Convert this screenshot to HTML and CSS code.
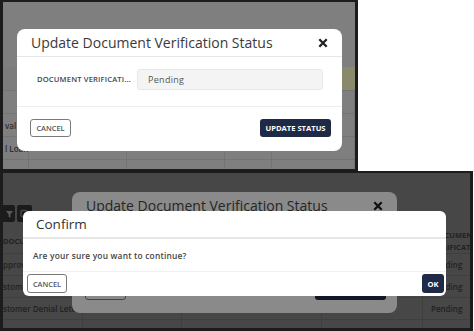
FILE: index.html
```html
<!DOCTYPE html>
<html lang="en">
<head>
<meta charset="utf-8">
<title>Document Verification Status</title>
<link rel="stylesheet" href="styles.css">
</head>
<body>
<div class="shot shot-a">
  <div class="tbl-a">
    <div class="spacer-a"></div>
    <div class="tr-a band"><div class="td lead"></div><div class="td"></div><div class="td"></div><div class="td"></div><div class="td"></div></div>
    <div class="tr-a"><div class="td"></div><div class="td"></div><div class="td"></div><div class="td"></div><div class="td"></div></div>
    <div class="tr-a"><div class="td cell-text">val ...</div><div class="td"></div><div class="td"></div><div class="td"></div><div class="td"></div></div>
    <div class="tr-a"><div class="td cell-text">l Loan</div><div class="td"></div><div class="td"></div><div class="td"></div><div class="td"></div></div>
    <div class="tr-a last"><div class="td"></div><div class="td"></div><div class="td"></div><div class="td"></div><div class="td"></div></div>
  </div>

  <div class="modal modal-a">
    <div class="modal-head">
      <span class="modal-title">Update Document Verification Status</span>
      <svg class="close" width="10" height="10" viewBox="0 0 10 10"><path d="M1.3 1.3L8.7 8.7M8.7 1.3L1.3 8.7" stroke="#222" stroke-width="2.3" fill="none"/></svg>
    </div>
    <div class="modal-body">
      <span class="field-label">DOCUMENT VERIFICATI...</span>
      <div class="field-input">Pending</div>
    </div>
    <div class="modal-foot">
      <button class="btn btn-outline">CANCEL</button>
      <button class="btn btn-primary">UPDATE STATUS</button>
    </div>
  </div>
</div>

<div class="shot shot-b">
  <div class="tbl-b">
    <div class="toolbar">
      <span class="tool"><svg width="12" height="17" viewBox="0 0 12 17"><path d="M3 6h7l-2.6 3.2v3.6l-1.8-1V9.2z" fill="#5a5a5a"/></svg></span>
      <span class="tool wide"><svg width="15" height="17" viewBox="0 0 15 17"><rect x="4" y="5.5" width="6" height="6" rx="1" fill="none" stroke="#4a4a4a" stroke-width="1.3"/></svg></span>
    </div>
    <div class="tr-b head"><div class="td">DOCUMENT TYPE</div><div class="td"></div><div class="td"></div><div class="td"></div><div class="td right-head">DOCUMENT<br>VERIFICATION</div></div>
    <div class="tr-b"><div class="td">pproval Letter</div><div class="td"></div><div class="td"></div><div class="td"></div><div class="td status">Pending</div></div>
    <div class="tr-b"><div class="td">stomer Loan</div><div class="td"></div><div class="td"></div><div class="td"></div><div class="td status">Pending</div></div>
    <div class="tr-b"><div class="td">stomer Denial Letter</div><div class="td"></div><div class="td"></div><div class="td"></div><div class="td status">Pending</div></div>
    <div class="tr-b"><div class="td"></div><div class="td"></div><div class="td"></div><div class="td"></div><div class="td"></div></div>
  </div>

  <div class="modal modal-dim">
    <div class="modal-head">
      <span class="modal-title">Update Document Verification Status</span>
      <svg class="close" width="10" height="10" viewBox="0 0 10 10"><path d="M1.3 1.3L8.7 8.7M8.7 1.3L1.3 8.7" stroke="#111" stroke-width="2.3" fill="none"/></svg>
    </div>
    <div class="modal-body">
      <span class="field-label">DOCUMENT VERIFICATI...</span>
      <div class="field-input">Pending</div>
    </div>
    <div class="modal-foot">
      <button class="btn btn-outline">CANCEL</button>
      <button class="btn btn-primary">UPDATE STATUS</button>
    </div>
  </div>

  <div class="confirm">
    <div class="confirm-head">Confirm</div>
    <div class="confirm-body">Are your sure you want to continue?</div>
    <div class="confirm-foot">
      <button class="btn btn-outline small">CANCEL</button>
      <button class="btn btn-primary ok">OK</button>
    </div>
  </div>
</div>
</body>
</html>
```

FILE: styles.css
```css
* { box-sizing: border-box; }

body {
  margin: 0;
  width: 474px;
  height: 331px;
  overflow: hidden;
  background: #ffffff;
  font-family: "Open Sans", "Liberation Sans", sans-serif;
  color: #333;
}

.shot {
  position: relative;
  overflow: hidden;
  border-style: solid;
  border-color: #1c1c1c;
}

.shot-a {
  width: 358px;
  height: 171px;
  border-width: 2px 3px 2px 3px;
  background: #7f7f7f;
}

.shot-b {
  width: 473px;
  height: 160px;
  border-width: 2px 3px 3px 3px;
  background: #474747;
}

/* ---------- background table, first shot ---------- */
.spacer-a { height: 65px; }

.tr-a {
  display: grid;
  grid-template-columns: 26px 98px 98px 47px 1fr;
  height: 23px;
  border-top: 1px solid #747474;
}

.tr-a .td {
  border-right: 1px solid #747474;
}

.tr-a.band { border-top: none; }
.tr-a.band .td { background: #8a896c; border-right: none; }
.tr-a.band .td.lead { background: #7c7c7c; }

.cell-text {
  font-size: 8px;
  font-weight: 600;
  color: #2e2e2e;
  white-space: nowrap;
  overflow: hidden;
  padding-left: 2px;
  display: flex;
  align-items: center;
}

/* ---------- background table, second shot ---------- */
.toolbar {
  display: flex;
  gap: 2px;
  padding-top: 32px;
  height: 55px;
}

.tool {
  display: block;
  width: 12px;
  height: 17px;
  background: #1b1b1b;
  border-radius: 0 2px 2px 0;
}
.tool svg { display: block; }
.tool.wide { width: 15px; border-radius: 2px; }

.tr-b {
  display: grid;
  grid-template-columns: 80px 99px 140px 101px 1fr;
  height: 22px;
  border-top: 1px solid #3f3f3f;
}
.tr-b.head { height: 25px; border-top: none; }

.tr-b .td {
  border-right: 1px solid #3f3f3f;
  font-size: 8px;
  font-weight: 600;
  color: #222;
  white-space: nowrap;
  overflow: hidden;
  display: flex;
  align-items: center;
}
.tr-b .td:last-child { border-right: none; }
.tr-b.head .td { font-weight: 700; font-size: 7.5px; }

.right-head {
  line-height: 12px;
  padding-left: 10px;
}
.status { padding-left: 8px; }

/* ---------- modal ---------- */
.modal {
  position: absolute;
  width: 325px;
  background: #ffffff;
  border-radius: 8px;
  display: flex;
  flex-direction: column;
}

.modal-a { left: 14px; top: 27px; height: 122px; }

.modal-head {
  height: 28px;
  padding: 0 14px;
  display: flex;
  align-items: center;
  justify-content: space-between;
  border-bottom: 1px solid #e6e6e6;
}

.modal-title {
  font-size: 14px;
  color: #3a3a3a;
  white-space: nowrap;
}

.close { display: block; }

.modal-body {
  height: 50px;
  padding: 12px 19px 0 20px;
  display: flex;
  align-items: flex-start;
  border-bottom: 1px solid #eeeeee;
}

.field-label {
  width: 100px;
  height: 21px;
  line-height: 21px;
  font-size: 7.6px;
  letter-spacing: 0.15px;
  font-weight: 600;
  color: #444;
  white-space: nowrap;
  overflow: hidden;
}

.field-input {
  flex: 1;
  height: 21px;
  line-height: 19px;
  padding-left: 10px;
  background: #f4f4f4;
  border: 1px solid #e8e8e8;
  border-radius: 3px;
  font-size: 9px;
  letter-spacing: 0.3px;
  color: #555;
}

.modal-foot {
  flex: 1;
  padding: 12px 11px 0 13px;
  display: flex;
  justify-content: space-between;
  align-items: flex-start;
}

.btn {
  height: 18px;
  padding: 0;
  border-radius: 3px;
  font-family: inherit;
  font-size: 7.4px;
  font-weight: 600;
  white-space: nowrap;
  cursor: pointer;
}

.btn-outline {
  width: 41px;
  background: #ffffff;
  color: #555;
  border: 1px solid #7a7a7a;
}

.btn-primary {
  width: 71px;
  background: #1f2a47;
  color: #ffffff;
  border: none;
  font-weight: 700;
  font-size: 7.6px;
}

/* dimmed modal (behind confirm) */
.modal-dim {
  left: 69px;
  top: 19px;
  height: 121px;
  background: #8a8a8a;
}
.modal-dim .modal-head { border-bottom-color: #7f7f7f; }
.modal-dim .modal-title { color: #262626; }
.modal-dim .modal-body { border-bottom-color: #838383; }
.modal-dim .field-label { color: #252525; }
.modal-dim .field-input { background: #858585; border-color: #808080; color: #2e2e2e; }
.modal-dim .btn-outline { background: #8a8a8a; border-color: #444; color: #2e2e2e; }
.modal-dim .btn-primary { background: #111726; color: #8a8a8a; }

/* ---------- confirm dialog ---------- */
.confirm {
  position: absolute;
  left: 20px;
  top: 38px;
  width: 423px;
  height: 85px;
  background: #ffffff;
  border-radius: 6px;
  display: flex;
  flex-direction: column;
}

.confirm-head {
  height: 28px;
  padding: 0 13px;
  display: flex;
  align-items: center;
  font-size: 13.5px;
  color: #333;
  border-bottom: 2px solid #e6e6e6;
}

.confirm-body {
  height: 33px;
  padding: 0 10px;
  display: flex;
  align-items: center;
  font-size: 8.4px;
  letter-spacing: 0.2px;
  font-weight: 600;
  color: #444;
  border-bottom: 1px solid #f0f0f0;
}

.confirm-foot {
  flex: 1;
  padding: 2px 2px 0 4px;
  display: flex;
  justify-content: space-between;
  align-items: flex-start;
}

.btn.small { width: 40px; height: 19px; }
.btn.ok { width: 22px; height: 19px; padding: 0; }
```
